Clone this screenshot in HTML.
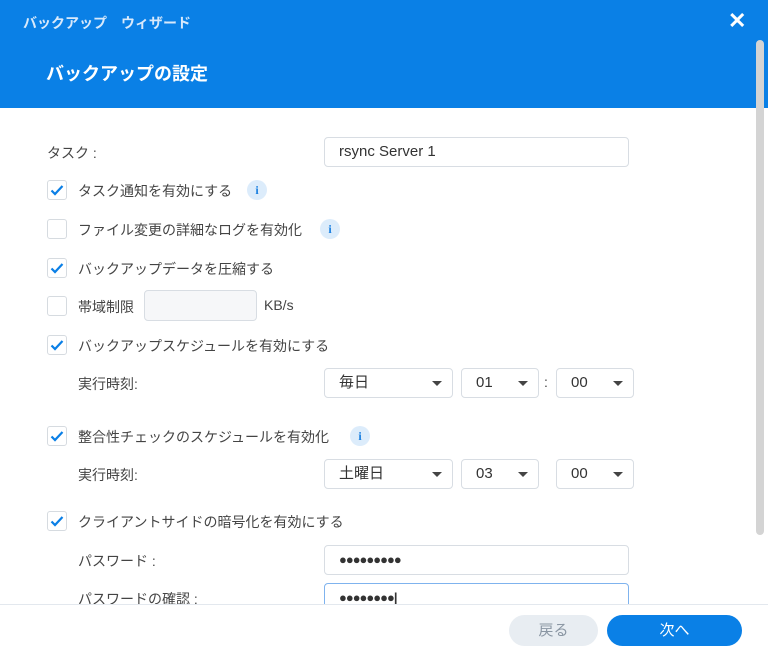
<!DOCTYPE html>
<html><head><meta charset="utf-8"><style>
*{box-sizing:border-box;margin:0;padding:0}
body{width:768px;height:660px;overflow:hidden;background:#fff;font-family:"Liberation Sans","Noto Sans CJK JP",sans-serif;color:#444;font-size:14px;position:relative}
.hdr{position:absolute;left:0;top:0;width:768px;height:108px;background:#0a80e6}
.t1{position:absolute;left:23px;top:13px;color:#d8e9fb;font-size:14px;font-weight:bold}
.t2{position:absolute;left:46px;top:60px;color:#fff;font-size:18px;font-weight:bold}
.x{position:absolute;left:728px;top:8px;color:#fff;font-size:22px;font-weight:bold}
.a{position:absolute;white-space:nowrap}
.cb{position:absolute;left:47px;width:20px;height:20px;border:1px solid #d6dbe0;border-radius:3px;background:#fff}
.cb svg{position:absolute;left:2px;top:2px}
.inp{position:absolute;border:1px solid #d8dde3;border-radius:4px;background:#fff;padding-left:14px;line-height:28px;color:#333;font-size:15px}
.sel svg{position:absolute;right:10px;top:12px}
.info{position:absolute;width:20px;height:20px;border-radius:10px;background:#dcecfb;color:#1a7fe0;font:bold 12px "Liberation Serif",serif;text-align:center;line-height:20px}
.ft{position:absolute;left:0;top:604px;width:768px;height:56px;border-top:1px solid #e3e8ee;background:#fff}
.btn{position:absolute;top:615px;height:31px;border-radius:16px;text-align:center;line-height:31px;font-size:15px}
.sb{position:absolute;left:756px;top:40px;width:8px;height:495px;background:#d4d4d4;border-radius:4px}
.dots{letter-spacing:-1px;font-size:13px;font-weight:bold;color:#333}
</style></head><body>
<div class="hdr"><div class="t1">バックアップ　ウィザード</div><div class="t2">バックアップの設定</div><div class="x">✕</div></div>
<div class="sb"></div>

<div class="a" style="left:47px;top:143px">タスク :</div>
<div class="inp" style="left:324px;top:137px;width:305px;height:30px">rsync Server 1</div>

<div class="cb" style="top:180px"><svg width="14" height="14"><path d="M1.5 7.5l3.5 3.5 7.5-8" stroke="#0a7fe6" stroke-width="2.2" fill="none"/></svg></div>
<div class="a" style="left:78px;top:181px">タスク通知を有効にする</div><div class="info" style="left:247px;top:180px">i</div>

<div class="cb" style="top:219px"></div>
<div class="a" style="left:78px;top:220px">ファイル変更の詳細なログを有効化</div><div class="info" style="left:320px;top:219px">i</div>

<div class="cb" style="top:258px"><svg width="14" height="14"><path d="M1.5 7.5l3.5 3.5 7.5-8" stroke="#0a7fe6" stroke-width="2.2" fill="none"/></svg></div>
<div class="a" style="left:78px;top:259px">バックアップデータを圧縮する</div>

<div class="cb" style="top:296px"></div>
<div class="a" style="left:78px;top:297px">帯域制限</div>
<div class="inp" style="left:144px;top:290px;width:113px;height:31px;background:#f6f7f9"></div>
<div class="a" style="left:264px;top:297px">KB/s</div>

<div class="cb" style="top:335px"><svg width="14" height="14"><path d="M1.5 7.5l3.5 3.5 7.5-8" stroke="#0a7fe6" stroke-width="2.2" fill="none"/></svg></div>
<div class="a" style="left:78px;top:336px">バックアップスケジュールを有効にする</div>

<div class="a" style="left:78px;top:374px">実行時刻:</div>
<div class="inp sel" style="left:324px;top:368px;width:129px;height:30px">毎日<svg width="10" height="6"><path d="M0 0h10L5 5z" fill="#444"/></svg></div>
<div class="inp sel" style="left:461px;top:368px;width:78px;height:30px">01<svg width="10" height="6"><path d="M0 0h10L5 5z" fill="#444"/></svg></div>
<div class="a" style="left:544px;top:374px">:</div>
<div class="inp sel" style="left:556px;top:368px;width:78px;height:30px">00<svg width="10" height="6"><path d="M0 0h10L5 5z" fill="#444"/></svg></div>

<div class="cb" style="top:426px"><svg width="14" height="14"><path d="M1.5 7.5l3.5 3.5 7.5-8" stroke="#0a7fe6" stroke-width="2.2" fill="none"/></svg></div>
<div class="a" style="left:78px;top:427px">整合性チェックのスケジュールを有効化</div><div class="info" style="left:350px;top:426px">i</div>

<div class="a" style="left:78px;top:465px">実行時刻:</div>
<div class="inp sel" style="left:324px;top:459px;width:129px;height:30px">土曜日<svg width="10" height="6"><path d="M0 0h10L5 5z" fill="#444"/></svg></div>
<div class="inp sel" style="left:461px;top:459px;width:78px;height:30px">03<svg width="10" height="6"><path d="M0 0h10L5 5z" fill="#444"/></svg></div>
<div class="inp sel" style="left:556px;top:459px;width:78px;height:30px">00<svg width="10" height="6"><path d="M0 0h10L5 5z" fill="#444"/></svg></div>

<div class="cb" style="top:511px"><svg width="14" height="14"><path d="M1.5 7.5l3.5 3.5 7.5-8" stroke="#0a7fe6" stroke-width="2.2" fill="none"/></svg></div>
<div class="a" style="left:78px;top:512px">クライアントサイドの暗号化を有効にする</div>

<div class="a" style="left:78px;top:551px">パスワード :</div>
<div class="inp dots" style="left:324px;top:545px;width:305px;height:30px">●●●●●●●●●</div>
<div class="a" style="left:78px;top:589px">パスワードの確認 :</div>
<div class="inp dots" style="left:324px;top:583px;width:305px;height:30px;border-color:#7fb3ee">●●●●●●●●|</div>

<div class="ft"></div>
<div class="btn" style="left:509px;width:89px;background:#e8edf2;color:#8a96a3">戻る</div>
<div class="btn" style="left:607px;width:135px;background:#0a80e6;color:#fff">次へ</div>
</body></html>
